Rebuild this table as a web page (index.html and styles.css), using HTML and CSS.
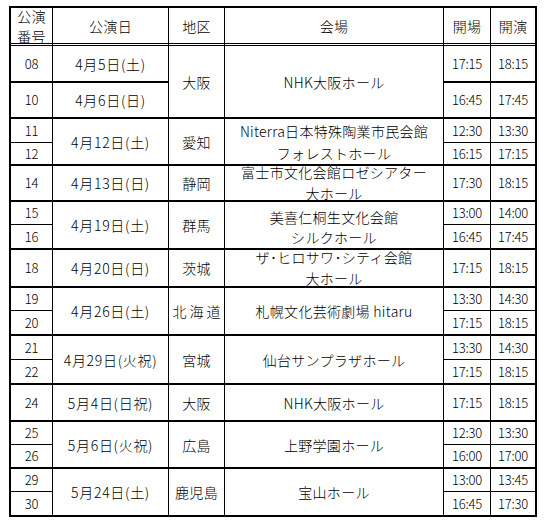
FILE: index.html
```html
<!DOCTYPE html>
<html lang="ja">
<head>
<meta charset="utf-8">
<link rel="stylesheet" href="styles.css">
</head>
<body>
<div class="sched">
  <div class="c hd num"><span>公演<br>番号</span></div>
  <div class="c hd">公演日</div>
  <div class="c hd">地区</div>
  <div class="c hd">会場</div>
  <div class="c hd">開場</div>
  <div class="c hd last">開演</div>

  <div class="c n b2">08</div>
  <div class="c d b2">4月5日(土)</div>
  <div class="c s2 b2">大阪</div>
  <div class="c s2 b2">NHK大阪ホール</div>
  <div class="c n b2">17:15</div>
  <div class="c n b2 last">18:15</div>
  <div class="c n b2">10</div>
  <div class="c d b2">4月6日(日)</div>
  <div class="c n b2">16:45</div>
  <div class="c n b2 last">17:45</div>

  <div class="c n">11</div>
  <div class="c d s2 b2">4月12日(土)</div>
  <div class="c s2 b2">愛知</div>
  <div class="c s2 b2 l22"><span>Niterra日本特殊陶業市民会館<br>フォレストホール</span></div>
  <div class="c n">12:30</div>
  <div class="c n last">13:30</div>
  <div class="c n b2">12</div>
  <div class="c n b2">16:15</div>
  <div class="c n b2 last">17:15</div>

  <div class="c n b2">14</div>
  <div class="c d b2">4月13日(日)</div>
  <div class="c b2">静岡</div>
  <div class="c b2 l21"><span>富士市文化会館ロゼシアター<br>大ホール</span></div>
  <div class="c n b2">17:30</div>
  <div class="c n b2 last">18:15</div>

  <div class="c n">15</div>
  <div class="c d s2 b2">4月19日(土)</div>
  <div class="c s2 b2">群馬</div>
  <div class="c s2 b2 l20"><span>美喜仁桐生文化会館<br>シルクホール</span></div>
  <div class="c n">13:00</div>
  <div class="c n last">14:00</div>
  <div class="c n b2">16</div>
  <div class="c n b2">16:45</div>
  <div class="c n b2 last">17:45</div>

  <div class="c n b2">18</div>
  <div class="c d b2">4月20日(日)</div>
  <div class="c b2">茨城</div>
  <div class="c b2 l21"><span>ザ･ヒロサワ･シティ会館<br>大ホール</span></div>
  <div class="c n b2">17:15</div>
  <div class="c n b2 last">18:15</div>

  <div class="c n">19</div>
  <div class="c d s2 b2">4月26日(土)</div>
  <div class="c s2 b2 wide">北海道</div>
  <div class="c s2 b2">札幌文化芸術劇場 hitaru</div>
  <div class="c n">13:30</div>
  <div class="c n last">14:30</div>
  <div class="c n b2">20</div>
  <div class="c n b2">17:15</div>
  <div class="c n b2 last">18:15</div>

  <div class="c n">21</div>
  <div class="c d s2 b2">4月29日(火祝)</div>
  <div class="c s2 b2">宮城</div>
  <div class="c s2 b2">仙台サンプラザホール</div>
  <div class="c n">13:30</div>
  <div class="c n last">14:30</div>
  <div class="c n b2">22</div>
  <div class="c n b2">17:15</div>
  <div class="c n b2 last">18:15</div>

  <div class="c n b2">24</div>
  <div class="c d b2">5月4日(日祝)</div>
  <div class="c b2">大阪</div>
  <div class="c b2">NHK大阪ホール</div>
  <div class="c n b2">17:15</div>
  <div class="c n b2 last">18:15</div>

  <div class="c n">25</div>
  <div class="c d s2 b2">5月6日(火祝)</div>
  <div class="c s2 b2">広島</div>
  <div class="c s2 b2">上野学園ホール</div>
  <div class="c n">12:30</div>
  <div class="c n last">13:30</div>
  <div class="c n b2">26</div>
  <div class="c n b2">16:00</div>
  <div class="c n b2 last">17:00</div>

  <div class="c n">29</div>
  <div class="c d s2 b0">5月24日(土)</div>
  <div class="c s2 b0">鹿児島</div>
  <div class="c s2 b0">宝山ホール</div>
  <div class="c n">13:00</div>
  <div class="c n last">13:45</div>
  <div class="c n b0">30</div>
  <div class="c n b0">16:45</div>
  <div class="c n b0 last">17:30</div>
</div>
</body>
</html>
```
FILE: styles.css
```css
html, body {
  margin: 0;
  padding: 0;
  background: #fff;
}

.sched {
  display: grid;
  grid-template-columns: 42px 116px 56px 219px 47px 44px;
  grid-template-rows: 38px 37px 36px 24px 23px 36px 23px 25px 38px 23px 25px 24px 25px 37px 23px 24px 23px 23px;
  width: 524px;
  margin: 6px 0 0 9px;
  border: 2px solid #000;
  font-family: "Noto Sans CJK JP", sans-serif;
  font-size: 14px;
  font-weight: 300;
  color: #000;
  letter-spacing: 0.3px;
}

.c {
  box-sizing: border-box;
  display: flex;
  align-items: center;
  justify-content: center;
  text-align: center;
  white-space: nowrap;
  line-height: 18px;
  border-right: 1px solid #000;
  border-bottom: 1px solid #000;
}

.c.last {
  border-right: 0;
}

.c.hd {
  border-bottom: 3px double #000;
}

.c.hd.num {
  font-size: 14px;
  line-height: 20px;
  padding-top: 1px;
}

.c.s2 {
  grid-row: span 2;
}

.c.b2 {
  border-bottom-width: 2px;
}

.c.b0 {
  border-bottom: 0;
}

.c.n {
  font-size: 13px;
  letter-spacing: -0.2px;
}

.c.d {
  letter-spacing: 0.7px;
}

.c.wide {
  letter-spacing: 3px;
  padding-left: 3px;
}

.c.l22 { line-height: 22px; }
.c.l21 { line-height: 21px; }
.c.l20 { line-height: 20px; padding-top: 4px; }
```
